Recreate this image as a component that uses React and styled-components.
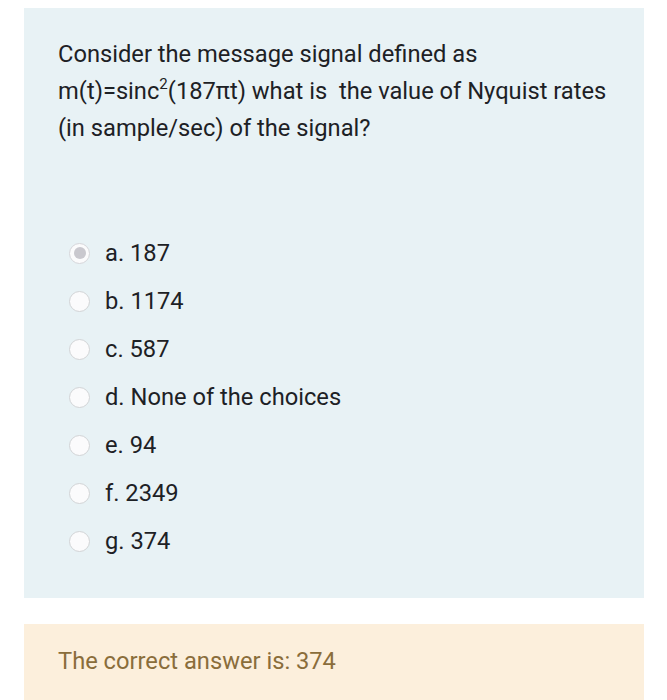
import React from "react";
import styled, { createGlobalStyle } from "styled-components";

const Global = createGlobalStyle`
  html, body { margin: 0; padding: 0; background: #ffffff; }
  body { font-family: Roboto, "Noto Sans", sans-serif; }
`;

const Page = styled.div`
  padding: 8px 23px 0 24px;
  display: flex;
  flex-direction: column;
  gap: 26px;
`;

const QuestionCard = styled.div`
  background: #e8f2f5;
  padding: 28px 34px 48px 34px;
  height: 590px;
  box-sizing: border-box;
`;

const QuestionText = styled.div`
  font-size: 23.7px;
  line-height: 37px;
  color: #1d2125;
  margin-bottom: 93px;
  sup { font-size: 15px; line-height: 0; vertical-align: 10px; }
`;

const Options = styled.div`
  display: flex;
  flex-direction: column;
  gap: 22px;
  padding-left: 11px;
`;

const Option = styled.label`
  display: flex;
  align-items: center;
  gap: 15px;
  font-size: 23.7px;
  line-height: 26px;
  color: #1d2125;
`;

const Radio = styled.span`
  width: 21px;
  height: 21px;
  border-radius: 50%;
  border: 1.5px solid ${(p) => (p.checked ? "#d6d6da" : "#d2d4d6")};
  background: #fbfbfc;
  box-sizing: border-box;
  display: flex;
  align-items: center;
  justify-content: center;
  &::after {
    content: "";
    width: 12px;
    height: 12px;
    border-radius: 50%;
    background: ${(p) => (p.checked ? "#c9c8ce" : "transparent")};
  }
`;

const AnswerCard = styled.div`
  background: #fcefdc;
  padding: 23px 34px 30px 34px;
  font-size: 23.7px;
  line-height: 28px;
  color: #8a6d3b;
  min-height: 90px;
  box-sizing: border-box;
`;

const options = [
  ["a. 187", true],
  ["b. 1174", false],
  ["c. 587", false],
  ["d. None of the choices", false],
  ["e. 94", false],
  ["f. 2349", false],
  ["g. 374", false],
];

export default function App() {
  return (
    <>
      <Global />
      <Page>
        <QuestionCard>
          <QuestionText>
            Consider the message signal defined as
            <br />
            m(t)=sinc<sup>2</sup>(187πt) what is&nbsp; the value of Nyquist rates
            <br />
            (in sample/sec) of the signal?
          </QuestionText>
          <Options>
            {options.map(([label, checked]) => (
              <Option key={label}>
                <Radio checked={checked} />
                {label}
              </Option>
            ))}
          </Options>
        </QuestionCard>
        <AnswerCard>The correct answer is: 374</AnswerCard>
      </Page>
    </>
  );
}
